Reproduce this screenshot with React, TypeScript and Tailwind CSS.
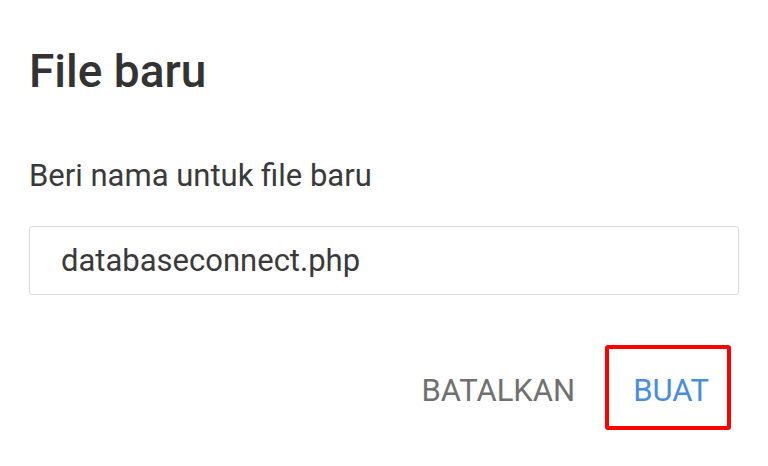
export default function App() {
  return (
    <div className="h-[466px] w-full bg-white pl-[29px] pr-[29px] pt-[48px] font-['Roboto',_'Noto_Sans',_sans-serif]">
      <h1 className="text-[46px] leading-[46px] font-medium text-[#333333]">File baru</h1>
      <p className="mt-[66px] text-[31px] leading-[31px] text-[#3a3a3a]">
        Beri nama untuk file baru
      </p>
      <div className="mt-[35px] flex h-[69px] items-center rounded-[3px] border-[1.5px] border-[#dcdcdc] pl-[31px]">
        <span className="text-[31px] leading-[31px] text-[#3a3a3a]">databaseconnect.php</span>
      </div>
      <div className="mt-[50px] mr-[8px] flex items-start justify-end gap-[30px]">
        <button className="mt-[30px] text-[31px] leading-[31px] text-[#707070]">BATALKAN</button>
        <button className="rounded-[3px] border-4 border-[#ff0000] pt-[26px] pb-[20px] pl-[24px] pr-[18px] text-[31px] leading-[31px] text-[#4a8ddf]">
          BUAT
        </button>
      </div>
    </div>
  );
}
